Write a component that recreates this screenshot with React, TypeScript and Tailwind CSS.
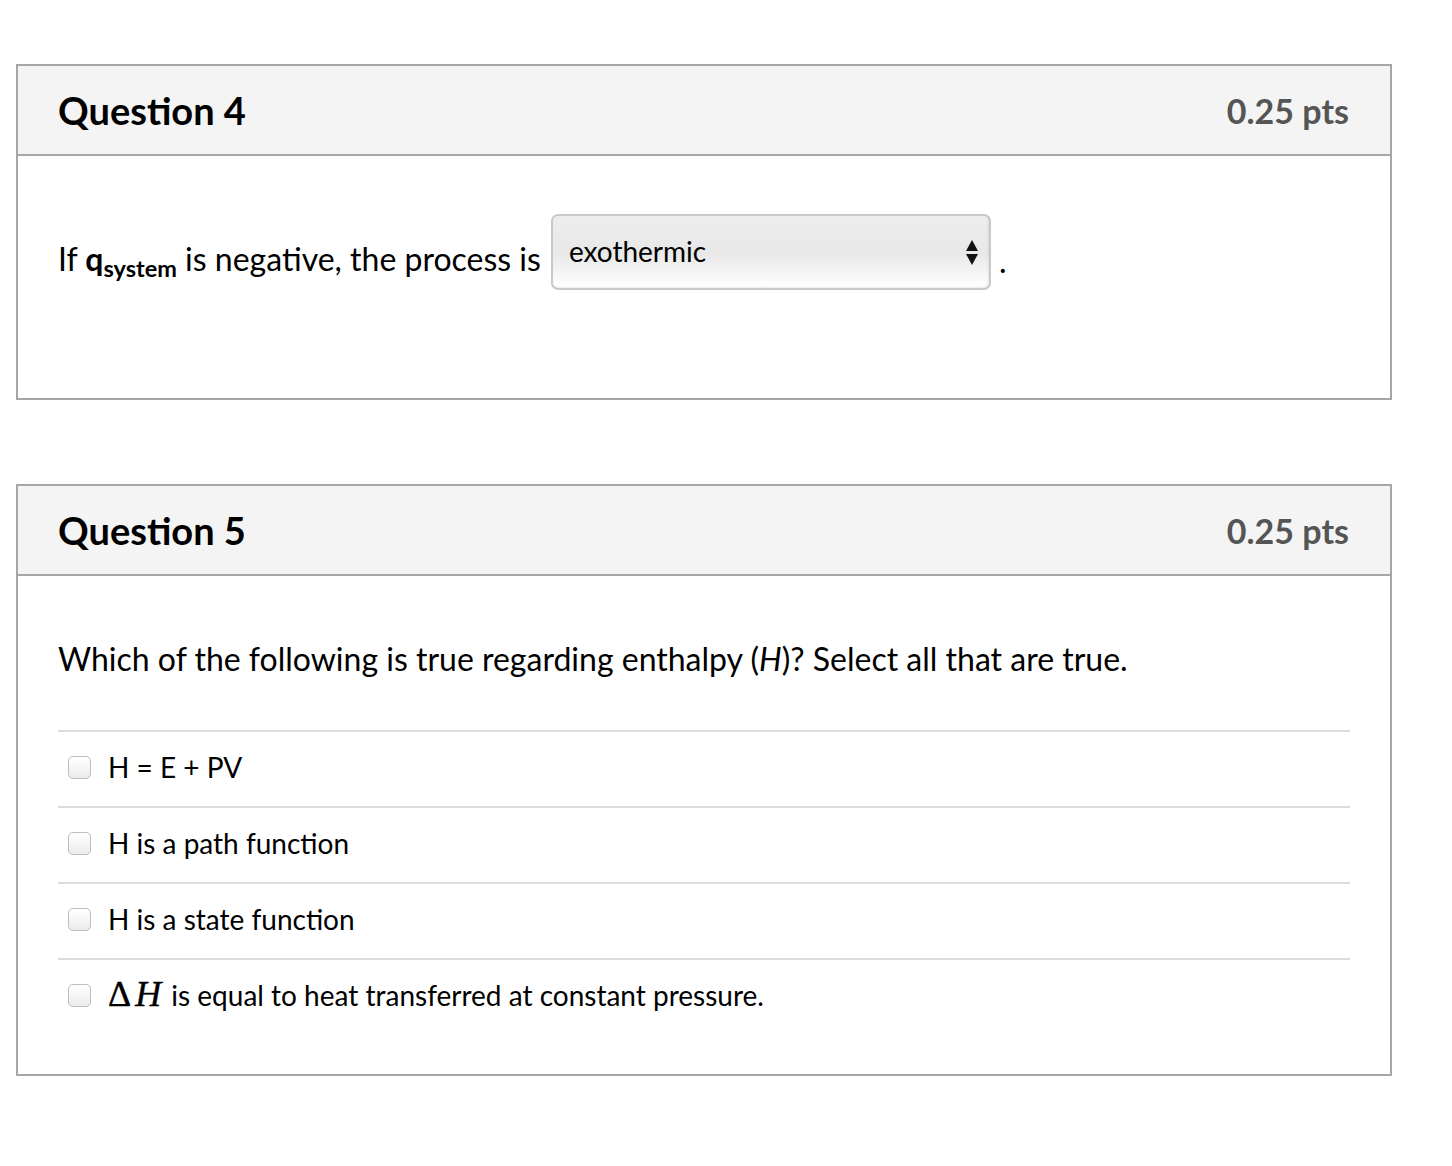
import React from "react";

const font = { fontFamily: "Lato, 'Noto Sans', sans-serif" };

function Header({ title }: { title: string }) {
  return (
    <div className="flex h-[90px] items-center justify-between border-b-2 border-[#a6a6a6] bg-[#f4f4f4] pl-[40px] pr-[41px]">
      <div className="text-[38px] font-bold text-black">{title}</div>
      <div className="text-[34px] font-bold text-[#555555]">0.25 pts</div>
    </div>
  );
}

function Checkbox() {
  return (
    <span className="ml-[10px] inline-block h-[23px] w-[23px] shrink-0 rounded-[5px] border border-[#bdbdbd] bg-gradient-to-b from-[#ffffff] to-[#ececec]" />
  );
}

function Answer({ children }: { children: React.ReactNode }) {
  return (
    <div className="flex h-[76px] items-center gap-[17px] border-t-2 border-[#dcdcdc] pb-[4px]">
      <Checkbox />
      <div className="text-[28px] text-black">{children}</div>
    </div>
  );
}

export default function App() {
  return (
    <div className="min-h-[1166px] bg-white pt-[64px] text-black" style={font}>
      <div className="ml-[16px] w-[1376px] border-2 border-[#a6a6a6]">
        <Header title="Question 4" />
        <div className="px-[40px] pt-[58px] pb-[108px]">
          <div className="flex items-center text-[32px]">
            <span className="mt-[14px]">
              If <b>q</b>
              <sub className="text-[23.5px] font-bold">system</sub> is negative, the process is
            </span>
            <div className="ml-[10px] flex h-[76px] w-[440px] items-center justify-between rounded-[7px] border-2 border-[#c8c8c8] bg-gradient-to-b from-[#ededed] via-[#e8e8e8] to-[#ffffff] pl-[16px] pr-[11px] shadow-[inset_-1px_-1px_2px_rgba(0,0,0,0.08)]">
              <span className="-mt-[2px] text-[28px] text-black">exothermic</span>
              <svg width="12" height="25" viewBox="0 0 12 25">
                <polygon points="6,0 12,11 0,11" fill="#111" />
                <polygon points="0,14 12,14 6,25" fill="#111" />
              </svg>
            </div>
            <span className="mt-[18px] ml-[8px]">.</span>
          </div>
        </div>
      </div>

      <div className="mt-[84px] ml-[16px] w-[1376px] border-2 border-[#a6a6a6]">
        <Header title="Question 5" />
        <div className="px-[40px] pt-[61px] pb-[40px]">
          <div className="text-[32px] leading-[44px]">
            Which of the following is true regarding enthalpy (<i>H</i>)? Select all that are true.
          </div>
          <div className="mt-[49px]">
            <Answer>H = E + PV</Answer>
            <Answer>H is a path function</Answer>
            <Answer>H is a state function</Answer>
            <Answer>
              <span
                style={{ fontFamily: "'Liberation Serif', 'DejaVu Serif', serif" }}
                className="mr-[3px] text-[36px] leading-none [-webkit-text-stroke:0.4px_black]"
              >
                Δ<i className="ml-[4px]">H</i>
              </span>{" "}
              is equal to heat transferred at constant pressure.
            </Answer>
          </div>
        </div>
      </div>
    </div>
  );
}
